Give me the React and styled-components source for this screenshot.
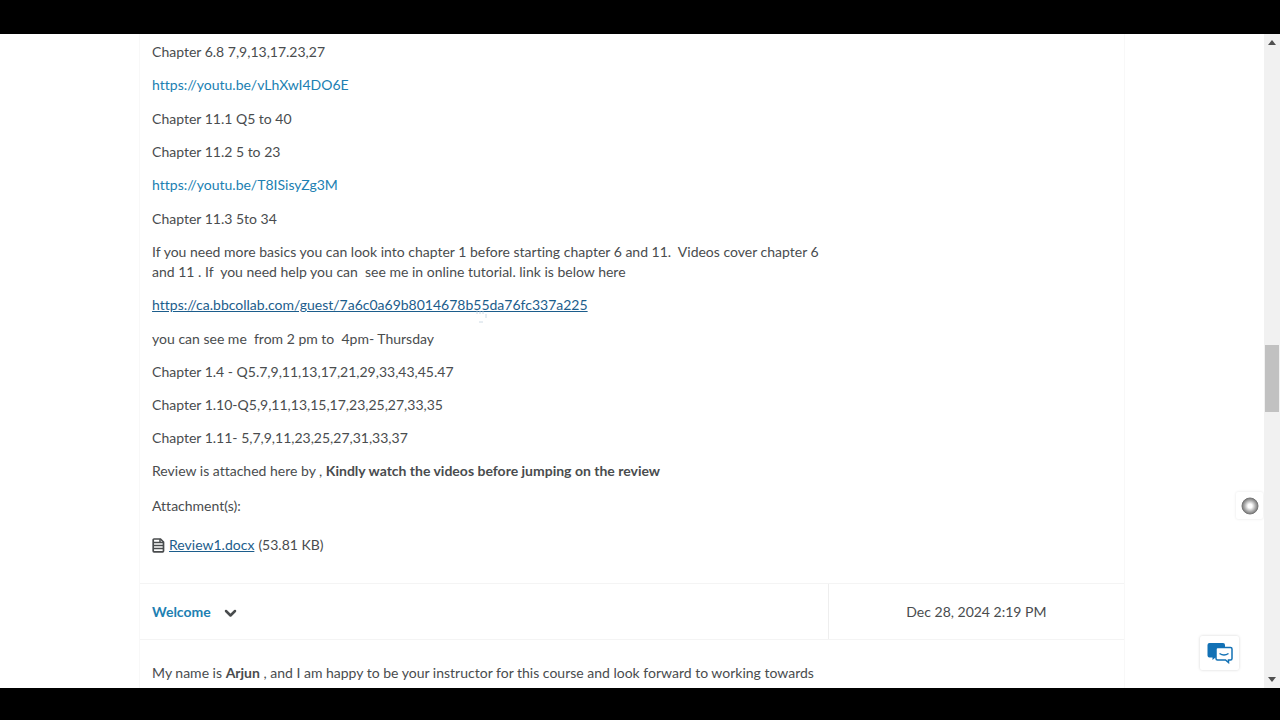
import React from "react";
import styled, { createGlobalStyle } from "styled-components";

const GlobalStyle = createGlobalStyle`
  * {
    box-sizing: border-box;
  }
  body {
    margin: 0;
    background: #000;
    color: #494c4e;
    font-family: Lato, "Liberation Sans", sans-serif;
    font-size: 14px;
    line-height: 20px;
    font-variant-ligatures: none;
  }
`;

const Frame = styled.div`
  display: flex;
  height: 100vh;
  padding: 34px 0 32px;
  overflow: hidden;
`;

const Page = styled.main`
  position: relative;
  flex: 1;
  overflow: hidden;
  background: #fff;
`;

const Feed = styled.div`
  width: 78%;
  min-height: 100%;
  margin: 0 auto;
  border: solid #f8f8f8;
  border-width: 0 1px;
`;

const Post = styled.article`
  display: flex;
  flex-direction: column;
  gap: 13px;
  width: 70%;
  padding: ${(props) => (props.$first ? "8px 4px 28px 12px" : "23px 4px 23px 12px")};
`;

const Text = styled.p`
  margin: 0;
  white-space: pre-wrap;
`;

const Link = styled.a`
  color: ${(props) => (props.$active ? "#1c5d8c" : "#2080b2")};
  text-decoration: ${(props) => (props.$active ? "underline" : "none")};
`;

const LinkLine = styled(Text)`
  padding-bottom: 1px;
`;

const Attachments = styled.section`
  display: flex;
  flex-direction: column;
  gap: 19px;
  padding-top: 2px;
`;

const FileRow = styled.div`
  display: flex;
  align-items: center;
  gap: 4px;
`;

const PostHeader = styled.header`
  display: flex;
  height: 57px;
  border: solid #f4f4f4;
  border-width: 1px 0;
`;

const TitleCell = styled.div`
  display: flex;
  align-items: center;
  gap: 12px;
  width: 70%;
  padding: 0 12px;
  border-right: 1px solid #eee;
`;

const Title = styled.h2`
  margin: 0;
  font-size: 14px;
  line-height: 20px;
`;

const DateCell = styled.time`
  display: flex;
  flex: 1;
  align-items: center;
  justify-content: center;
`;

const IconButton = styled.button`
  display: flex;
  padding: 0;
  border: 0;
  background: none;
`;

const FloatButton = styled(IconButton)`
  position: absolute;
  right: ${(props) => (props.$chat ? "25px" : "1px")};
  bottom: ${(props) => (props.$chat ? "18px" : "169px")};
  align-items: center;
  justify-content: center;
  width: ${(props) => (props.$chat ? "39px" : "27px")};
  height: ${(props) => (props.$chat ? "34px" : "27px")};
  border-radius: 2px;
  background: #fff;
  box-shadow: 0 0 3px ${(props) => (props.$chat ? "#d4d4d4" : "#e4e4e4")};
`;

const Pointer = styled.svg`
  position: absolute;
  top: 272px;
  left: 474px;
`;

const Scrollbar = styled.div`
  display: flex;
  flex-direction: column;
  align-items: center;
  width: 16px;
  padding: 6px 0;
  background: #f1f1f1;
`;

const Track = styled.div`
  display: flex;
  flex: 1;
  flex-direction: column;
  width: 14px;
`;

const Spacer = styled.div`
  flex: ${(props) => props.$grow};
`;

const Thumb = styled.div`
  height: 67px;
  background: #c1c1c1;
`;

const VideoLink = ({ url, active }) => (
  <LinkLine>
    <Link href={url} $active={active}>
      {url}
    </Link>
  </LinkLine>
);

const FileIcon = () => (
  <svg width="13" height="16" viewBox="0 0 13 16" fill="none" aria-hidden="true">
    <path
      d="M2 2h6.500l3 3v9a.8.8 0 0 1-.8.8H2a.8.8 0 0 1-.8-.8V2.800A.8.8 0 0 1 2 2z"
      stroke="#494c4e"
      strokeWidth="1.700"
    />
    <path
      d="M2 5.500h6M2 8.500h9M2 11.500h9M8 2v3.500h3.500"
      stroke="#494c4e"
      strokeWidth="1.500"
    />
  </svg>
);

const ChevronIcon = () => (
  <svg width="16" height="16" viewBox="0 0 16 16" fill="none" aria-hidden="true">
    <path
      d="M3 7l4.500 4.500L12 7"
      stroke="#494c4e"
      strokeWidth="2.500"
      strokeLinecap="round"
      strokeLinejoin="round"
    />
  </svg>
);

const ChatIcon = () => (
  <svg width="26" height="22" viewBox="0 0 26 22" aria-hidden="true">
    <path
      d="M2.500 1H16q2 0 2 2v11q0 1.500-2 1.500H8.500L5.500 18v-2.500h-3q-2 0-2-2V3q0-2 2-2z"
      fill="#1271b5"
    />
    <path
      d="M10.500 5.500h13q1.500 0 1.500 1.500v9.500q0 1.500-1.500 1.500h-2v2.500l-3-2.500h-8q-1.500 0-1.500-1.500V7q0-1.500 1.500-1.500z"
      fill="#fff"
      stroke="#1271b5"
      strokeWidth="1.500"
    />
    <path d="M12.500 11.500q4.500 3 9 0" fill="none" stroke="#1271b5" strokeWidth="1.500" />
  </svg>
);

const RecordIcon = () => (
  <svg width="18" height="18" viewBox="0 0 18 18" aria-hidden="true">
    <defs>
      <radialGradient id="lens">
        <stop offset="0.250" stopColor="#fff" />
        <stop offset="0.700" stopColor="#aaa" />
        <stop offset="1" stopColor="#777" />
      </radialGradient>
    </defs>
    <circle cx="9" cy="9" r="8" fill="url(#lens)" stroke="#777" />
  </svg>
);

const Arrow = ({ down }) => (
  <svg width="8" height="5" viewBox="0 0 8 5" aria-hidden="true">
    <path d={down ? "M0 0h8L4 5z" : "M0 5h8L4 0z"} fill="#505050" />
  </svg>
);

const App = () => {
  return (
    <>
      <GlobalStyle />
      <Frame>
        <Page>
          <Feed>
            <Post $first>
              <Text>Chapter 6.8 7,9,13,17.23,27</Text>
              <VideoLink url="https://youtu.be/vLhXwI4DO6E" />
              <Text>Chapter 11.1 Q5 to 40</Text>
              <Text>Chapter 11.2 5 to 23</Text>
              <VideoLink url="https://youtu.be/T8ISisyZg3M" />
              <Text>Chapter 11.3 5to 34</Text>
              <Text>
                {
                  "If you need more basics you can look into chapter 1 before starting chapter 6 and 11.  Videos cover chapter 6 and 11 . If  you need help you can  see me in online tutorial. link is below here"
                }
              </Text>
              <VideoLink
                url="https://ca.bbcollab.com/guest/7a6c0a69b8014678b55da76fc337a225"
                active
              />
              <Text>{"you can see me  from 2 pm to  4pm- Thursday"}</Text>
              <Text>Chapter 1.4 - Q5.7,9,11,13,17,21,29,33,43,45.47</Text>
              <Text>Chapter 1.10-Q5,9,11,13,15,17,23,25,27,33,35</Text>
              <Text>Chapter 1.11- 5,7,9,11,23,25,27,31,33,37</Text>
              <Text>
                Review is attached here by ,{" "}
                <b>Kindly watch the videos before jumping on the review</b>
              </Text>
              <Attachments>
                <Text>Attachment(s):</Text>
                <FileRow>
                  <FileIcon />
                  <Link href="#review" $active>
                    Review1.docx
                  </Link>
                  <span>(53.81 KB)</span>
                </FileRow>
              </Attachments>
            </Post>
            <PostHeader>
              <TitleCell>
                <Title>
                  <Link href="#welcome">Welcome</Link>
                </Title>
                <IconButton aria-label="Actions for Welcome">
                  <ChevronIcon />
                </IconButton>
              </TitleCell>
              <DateCell dateTime="2024-12-28T14:19">Dec 28, 2024 2:19 PM</DateCell>
            </PostHeader>
            <Post>
              <Text>
                My name is <b>Arjun</b> , and I am happy to be your instructor for this
                course and look forward to working towards
              </Text>
            </Post>
          </Feed>
          <Pointer width="14" height="18" viewBox="0 0 14 18" fill="none" aria-hidden="true">
            <path
              d="M3 8V4M6 8V5M9 8V5M12 8v4M5 16h4"
              stroke="#b9cbd8"
              opacity="0.700"
            />
          </Pointer>
          <FloatButton aria-label="Record">
            <RecordIcon />
          </FloatButton>
          <FloatButton $chat aria-label="Open chat">
            <ChatIcon />
          </FloatButton>
        </Page>
        <Scrollbar aria-hidden="true">
          <Arrow />
          <Track>
            <Spacer $grow={300} />
            <Thumb />
            <Spacer $grow={265} />
          </Track>
          <Arrow down />
        </Scrollbar>
      </Frame>
    </>
  );
};

export default App;
